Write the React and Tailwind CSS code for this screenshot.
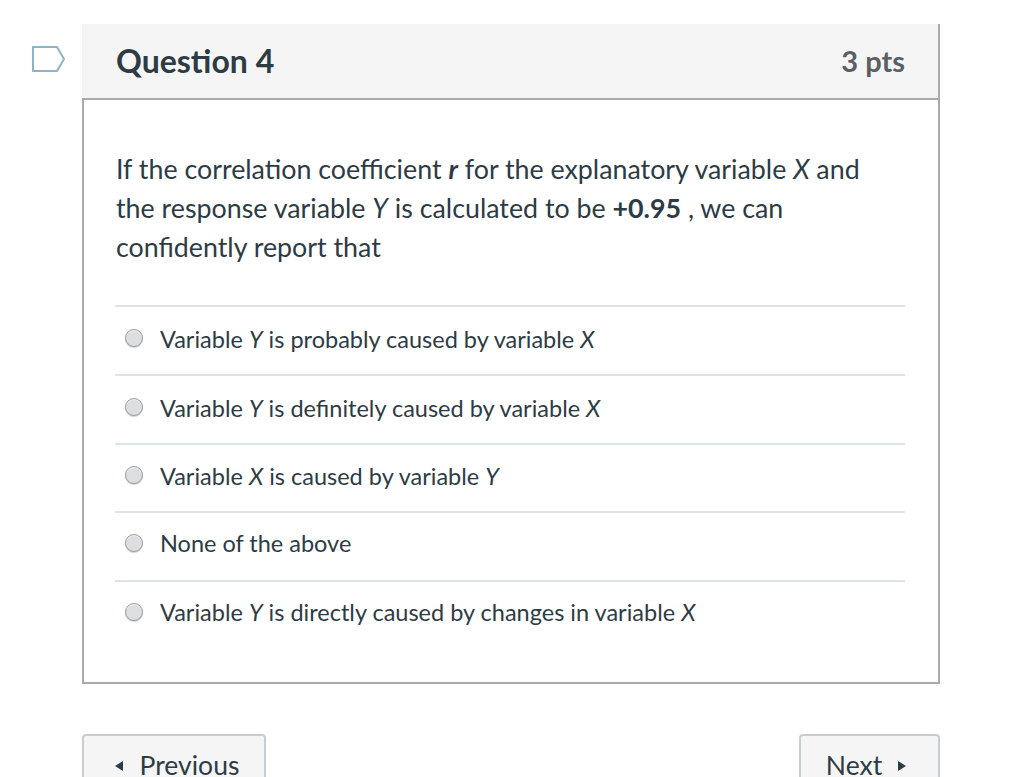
const options = [
  [<>Variable <i>Y</i> is probably caused by variable <i>X</i></>, "pt-[18px]", "pt-[22px]"],
  [<>Variable <i>Y</i> is definitely caused by variable <i>X</i></>, "pt-[18px]", "pt-[22px]"],
  [<>Variable <i>X</i> is caused by variable <i>Y</i></>, "pt-[17px]", "pt-[21px]"],
  [<>None of the above</>, "pt-[16px]", "pt-[21px]"],
  [<>Variable <i>Y</i> is directly caused by changes in variable <i>X</i></>, "pt-[16px]", "pt-[21px]"],
];

function Radio() {
  return (
    <span className="block w-[18px] h-[18px] shrink-0 rounded-full bg-[#dcdee0] border border-[#9aa0a4] shadow-[inset_0_1px_1px_rgba(255,255,255,0.7),0_1px_1px_rgba(0,0,0,0.2)]" />
  );
}

export default function App() {
  return (
    <div className="h-[777px] overflow-hidden bg-white font-['Lato','Noto_Sans',sans-serif] text-[#2d3b45] pt-6 flex">
      <div className="w-[82px] shrink-0 pt-[22px] pl-[31px]">
        <svg width="35" height="28" viewBox="0 0 35 28" fill="none">
          <path d="M2 1 H26 L33 13 L26 25 H2 Z" stroke="#8fb2c9" strokeWidth="2" strokeLinejoin="round" />
        </svg>
      </div>
      <div className="w-[858px] shrink-0">
        <div className="border-r-2 border-[#ababab]">
          <div className="h-[76px] bg-[#f5f5f5] border-b-2 border-[#ababab] flex items-center justify-between pl-[34px] pr-[33px]">
            <h2 className="text-[32px] font-bold leading-none text-[#2d3b45]">Question 4</h2>
            <span className="text-[29px] font-bold leading-none text-[#5a5f63] -mt-[2px]">3 pts</span>
          </div>
          <div className="border-l-2 border-b-2 border-[#ababab] h-[584px] pl-[32px] pr-[33px] pt-[50px]">
            <p className="text-[26.8px] leading-[39px]">
              If the correlation coefficient <b><i>r</i></b> for the explanatory variable <i>X</i> and the response variable <i>Y</i> is calculated to be <b>+0.95</b> , we can confidently report that
            </p>
            <ul className="mt-[38px] -ml-[1px]">
              {options.map(([label, textPad, radioPad], i) => (
                <li key={i} className="h-[68.75px] border-t-2 border-[#e0e3e5] flex items-start pl-[10px]">
                  <div className={radioPad}><Radio /></div>
                  <div className={`ml-[17px] text-[23.5px] leading-[28px] ${textPad}`}>{label}</div>
                </li>
              ))}
            </ul>
          </div>
        </div>
        <div className="mt-[50px] flex justify-between">
          <button className="w-[184px] h-[60px] rounded-t-[4px] border-2 border-[#c7cdd1] bg-[#f5f5f5] flex items-start justify-center gap-[16px] pl-[5px] pt-[11px] text-[26.5px] leading-[36px] text-[#2d3b45]">
            <svg width="10" height="12" viewBox="0 0 10 12" className="mt-[13px]"><path d="M9 1 V11 L1 6 Z" fill="#2d3b45" /></svg>
            Previous
          </button>
          <button className="w-[141px] h-[60px] rounded-t-[4px] border-2 border-[#c7cdd1] bg-[#f5f5f5] flex items-start justify-center gap-[15px] pr-[6px] pt-[11px] text-[26.5px] leading-[36px] text-[#2d3b45]">
            Next
            <svg width="10" height="12" viewBox="0 0 10 12" className="mt-[13px]"><path d="M1 1 V11 L9 6 Z" fill="#2d3b45" /></svg>
          </button>
        </div>
      </div>
    </div>
  );
}
